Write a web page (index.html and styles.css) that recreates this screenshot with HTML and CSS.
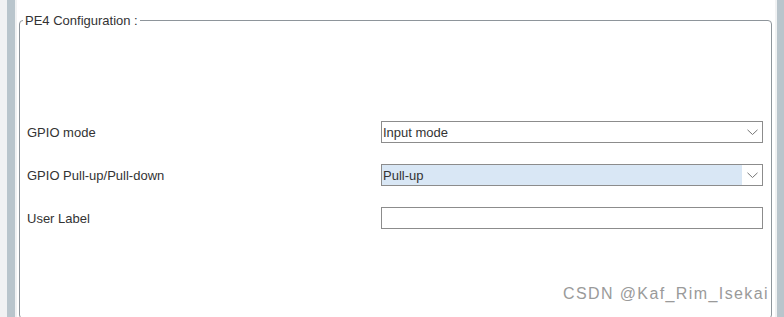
FILE: index.html
```html
<!DOCTYPE html>
<html>
<head>
<meta charset="utf-8">
<link rel="stylesheet" href="styles.css">
</head>
<body>
<div class="frame">
  <div class="edge-light"></div>
  <div class="edge-bar"></div>
  <div class="edge-light narrow"></div>
  <div class="main">
    <fieldset class="group">
      <legend class="group-title">PE4 Configuration :</legend>
      <div class="form">
        <div class="label">GPIO mode</div>
        <div class="select">
          <span class="value">Input mode</span>
          <span class="arrow"><svg width="11" height="7" viewBox="0 0 11 7"><polyline points="0.5,0.8 5.5,5.5 10.5,0.8" fill="none" stroke="#767676" stroke-width="1"/></svg></span>
        </div>
        <div class="label">GPIO Pull-up/Pull-down</div>
        <div class="select selected">
          <span class="value">Pull-up</span>
          <span class="arrow"><svg width="11" height="7" viewBox="0 0 11 7"><polyline points="0.5,0.8 5.5,5.5 10.5,0.8" fill="none" stroke="#767676" stroke-width="1"/></svg></span>
        </div>
        <div class="label">User Label</div>
        <div class="select input"></div>
      </div>
    </fieldset>
  </div>
  <div class="edge-light narrow"></div>
  <div class="edge-bar right"></div>
</div>
<div class="watermark">CSDN @Kaf_Rim_Isekai</div>
</body>
</html>
```
FILE: styles.css
```css
html, body {
  margin: 0;
  padding: 0;
}
body {
  width: 784px;
  height: 317px;
  overflow: hidden;
  background: #ffffff;
  font-family: "Liberation Sans", Arial, sans-serif;
  color: #333333;
  position: relative;
}
.frame {
  display: flex;
  height: 317px;
  overflow: hidden;
}
.edge-light {
  width: 7px;
  background: #f1f2f3;
}
.edge-light.narrow {
  width: 2px;
}
.edge-bar {
  width: 8px;
  background: #b9c5cc;
}
.edge-bar.right {
  width: 7px;
}
.main {
  flex: 1;
  padding: 13px 3px 0 2px;
  background: #ffffff;
  overflow: hidden;
}
.group {
  margin: 0;
  padding: 0 8px 0 7px;
  border: 1px solid #8e959b;
  border-radius: 4px;
  height: 306px;
  box-sizing: border-box;
  min-width: 0;
}
.group-title {
  font-size: 13px;
  line-height: 15px;
  padding: 0 2px;
  margin-left: -4px;
  color: #333333;
}
.form {
  display: grid;
  grid-template-columns: 354px 1fr;
  grid-auto-rows: 22px;
  row-gap: 21px;
  align-items: center;
  padding-top: 93px;
}
.label {
  font-size: 13px;
  line-height: 15px;
}
.select {
  height: 22px;
  box-sizing: border-box;
  border: 1px solid #8c8c8c;
  display: flex;
  align-items: center;
  background: #ffffff;
}
.select.selected {
  background: #d9e7f5;
}
.value {
  flex: 1;
  font-size: 13px;
  line-height: 15px;
  padding-left: 1px;
}
.arrow {
  width: 20px;
  height: 20px;
  background: #ffffff;
  display: flex;
  align-items: center;
  justify-content: center;
}
.arrow svg {
  display: block;
  margin-top: 1px;
}
.watermark {
  position: absolute;
  right: 15px;
  top: 285px;
  font-size: 16px;
  line-height: 18px;
  letter-spacing: 1.4px;
  color: #9a9a9a;
}
```
